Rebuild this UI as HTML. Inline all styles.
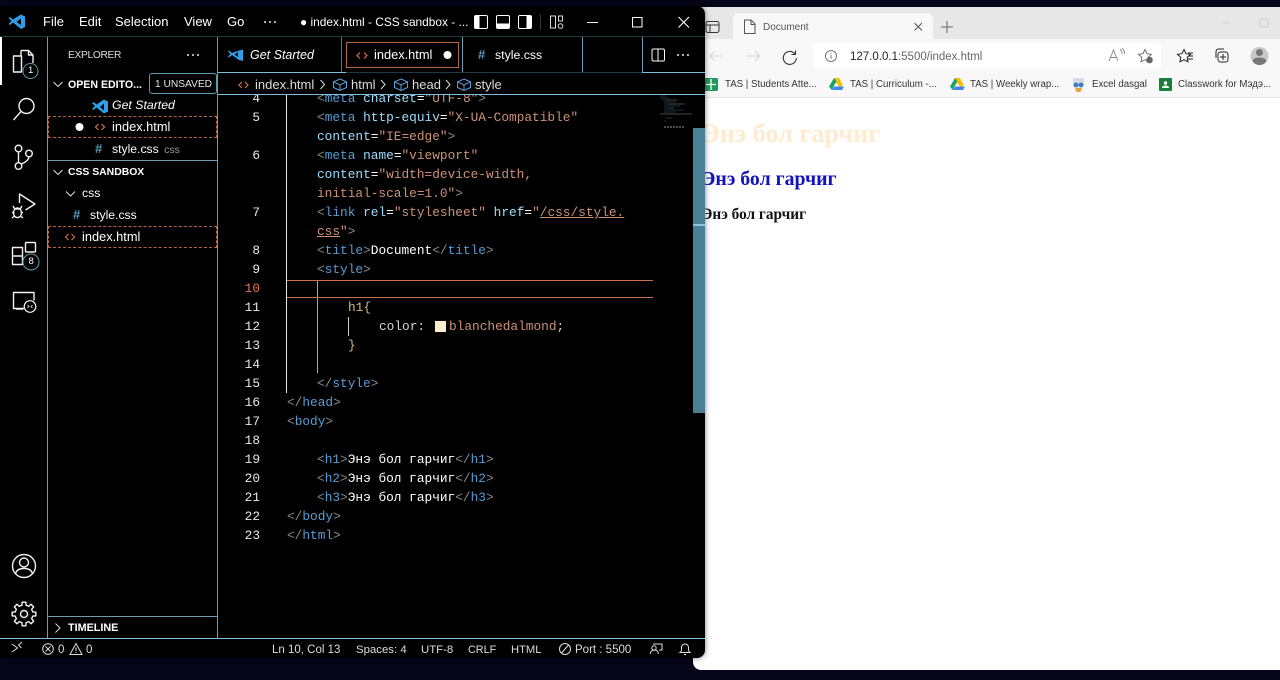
<!DOCTYPE html>
<html><head><meta charset="utf-8"><title>VS Code and browser</title>
<style>
html,body{margin:0;padding:0;width:1280px;height:680px;overflow:hidden;background:#06061a}
body{filter:blur(.3px)}
*{box-sizing:border-box}
.a{position:absolute}
.t{position:absolute;white-space:nowrap;line-height:20px;height:20px;font-family:"Liberation Sans","Noto Sans CJK SC",sans-serif;font-size:12.5px;color:#fff}
.m{font-family:"Liberation Mono",monospace;font-size:12.8px;color:#fff}
.n{font-family:"Liberation Mono",monospace;font-size:12.8px;color:#e8e8e8;width:40px;text-align:right;left:220px}
.g{color:#8a8a8a}.b{color:#569cd6}.c{color:#9cdcfe}.s{color:#ce9178}.y{color:#dcdcaa}.w{color:#fff}.k{color:#d7ba7d}.d{color:#d4d4d4}
.h{font-family:"Liberation Serif",serif;font-weight:bold;position:absolute;white-space:nowrap;line-height:1}
svg{position:absolute;overflow:visible}
.bm{position:absolute;white-space:nowrap;font-family:"Liberation Sans",sans-serif;font-size:9.7px;color:#333;line-height:14px;top:78px}
</style></head><body>

<!-- Browser -->
<div class="a" style="left:693px;top:7px;width:587px;height:663px;background:#fff;border-radius:0 0 0 8px;overflow:hidden">
<div class="a" style="left:0;top:0;width:587px;height:32px;background:#e7e7e7"></div>
<div class="a" style="left:0;top:32px;width:587px;height:59px;background:#f8f8f8;border-bottom:1px solid #e5e5e5"></div>
<div class="a" style="left:40px;top:6px;width:200px;height:27px;background:#f8f8f8;border-radius:6px 6px 0 0"></div>
<div class="a" style="left:120px;top:36px;width:348px;height:25px;background:#fff;border-radius:3px"></div>
</div>

<svg style="left:0;top:0" width="1280" height="680" fill="none">
<!-- browser chrome icons -->
<rect x="706" y="21.500" width="13" height="11" rx="2" stroke="#333" stroke-width="1"/><path d="M706 25h13M710 25v8" stroke="#333"/>
<path d="M744.500 20h6.500l4 4v9.500h-10.500zM751 20v4.500h4" stroke="#555" stroke-width="1"/>
<path d="M914.500 23l7.500 7.500M922 23l-7.500 7.500" stroke="#555" stroke-width="1"/>
<path d="M947 21v12M941 27h12" stroke="#666" stroke-width="1"/>
<path d="M1222 23h8" stroke="#d5d5d5" stroke-width="1.200"/><rect x="1260" y="19" width="8" height="8" rx="1.500" stroke="#cfcfcf"/>
<path d="M723 56h-13M715 51l-5 5 5 5" stroke="#d4d4d4"/><path d="M747 56h13M755 51l5 5-5 5" stroke="#d4d4d4"/>
<path d="M795.500 50.500v4h-4M795 54a6.500 6.500 0 1 0 1.300 4" stroke="#333" stroke-width="1.100"/>
<circle cx="831" cy="56" r="5.500" stroke="#777"/><path d="M831 55v4M831 53v.8" stroke="#777"/>
<path d="M1109 61l4.500-11 4.500 11M1110.500 57.500h6M1120 49q2.500 2.500 2 5M1122 48q3 3 2.500 6" stroke="#8a8a8a" stroke-width=".9"/>
<path d="M1145 49.500l2 4.200 4.500.6-3.300 3.100.8 4.400-4-2.100-4 2.100.8-4.400-3.300-3.100 4.500-.6z" stroke="#666" stroke-width=".9"/><circle cx="1149.500" cy="60" r="3.300" fill="#666"/>
<path d="M1184 49.500l2 4.200 4.500.6-3.300 3.100.8 4.400-4-2.100-4 2.100.8-4.400-3.300-3.100 4.500-.6z" stroke="#222" stroke-width="1"/><path d="M1188 53h5M1189 56h4M1188 59h5" stroke="#222"/>
<rect x="1218" y="52" width="10" height="10" rx="2.500" stroke="#222"/><path d="M1216 58v-6q0-3 3-3h5M1223 54v6M1220 57h6" stroke="#222"/>
<circle cx="1259.500" cy="56" r="9" fill="#c8c8c8"/><circle cx="1259.500" cy="52.500" r="3.500" fill="#777"/><path d="M1252.800 61.500q0-4 6.700-4t6.700 4q-2.500 3.500-6.700 3.500t-6.700-3.500z" fill="#777"/>
<!-- bookmark icons -->
<rect x="704" y="78" width="14" height="13" rx="1.500" fill="#1f9a5c"/><path d="M711 79v11M706 84.500h10" stroke="#fff" stroke-width="1.300"/>
<path d="M834 78h5l3.500 6.500-2.500 4.500" fill="#fbbc04"/><path d="M834 78l-5 8.500 2.500 3.500 5-8.500z" fill="#1ea362"/><path d="M831.500 90h10.500l2-3.500h-10z" fill="#4285f4"/>
<path d="M955 78h5l3.500 6.500-2.500 4.500" fill="#fbbc04"/><path d="M955 78l-5 8.500 2.500 3.500 5-8.500z" fill="#1ea362"/><path d="M952.500 90h10.500l2-3.500h-10z" fill="#4285f4"/>
<rect x="1073" y="78" width="11" height="8" rx="1" fill="#d9d9e8"/><circle cx="1076" cy="85" r="2.500" fill="#3f7fc4"/><circle cx="1081" cy="85" r="2.500" fill="#3f7fc4"/><path d="M1075 88h7l-1.500 4h-4z" fill="#e8a33d"/>
<rect x="1159" y="78" width="13" height="13" rx="1" fill="#188038"/><circle cx="1165.500" cy="83" r="1.700" fill="#fff"/><path d="M1162 88q0-2.500 3.500-2.500t3.500 2.500z" fill="#fff"/>
</svg>
<div class="t" style="left:763px;top:18px;font-size:10px;color:#555">Document</div>
<div class="t" style="left:850px;top:47px;font-size:11.500px;color:#666"><span style="color:#222">127.0.0.1</span>:5500/index.html</div>
<div class="bm" style="left:725px">TAS | Students Atte...</div>
<div class="bm" style="left:850px">TAS | Curriculum -...</div>
<div class="bm" style="left:970px">TAS | Weekly wrap...</div>
<div class="bm" style="left:1092px">Excel dasgal</div>
<div class="bm" style="left:1178px">Classwork for Мэдэ...</div>
<div class="h" style="left:702px;top:121px;font-size:26.200px;color:#ffebcd">Энэ бол гарчиг</div>
<div class="h" style="left:702px;top:170px;font-size:19.800px;color:#1212c0">Энэ бол гарчиг</div>
<div class="h" style="left:702px;top:207px;font-size:15.300px;color:#111">Энэ бол гарчиг</div>

<!-- VS Code window -->
<div class="a" style="left:0;top:6px;width:705px;height:652px;background:#000;border-radius:0 8px 8px 0;overflow:hidden;box-shadow:0 0 6px rgba(0,0,0,.5)">
<div class="a" style="left:693px;top:122px;width:12px;height:285px;background:#4b7f96"></div>
<div class="a" style="left:693px;top:218px;width:12px;height:2px;background:#8fc4dc"></div>
<div class="a" style="left:0;top:30px;width:705px;height:1px;background:#1d3a46"></div>
<div class="a" style="left:47px;top:31px;width:1px;height:601px;background:#6d9cb5"></div>
<div class="a" style="left:217px;top:31px;width:1px;height:601px;background:#6d9cb5"></div>
<div class="a" style="left:0;top:632px;width:705px;height:1px;background:#7fbfdc"></div>
<div class="a" style="left:218px;top:66px;width:128px;height:1px;background:#7fbfdc"></div>
<div class="a" style="left:346px;top:66px;width:296px;height:1px;background:#1d3a46"></div>
<div class="a" style="left:642px;top:66px;width:63px;height:1px;background:#7fbfdc"></div>
<div class="a" style="left:218px;top:88px;width:487px;height:1px;background:#7fbfdc"></div>
<div class="a" style="left:48px;top:154px;width:169px;height:1px;background:#6d9cb5"></div>
<div class="a" style="left:48px;top:610px;width:169px;height:1px;background:#6d9cb5"></div>
<div class="a" style="left:341px;top:31px;width:1px;height:35px;background:#4f7b8f"></div>
<div class="a" style="left:462px;top:31px;width:1px;height:35px;background:#6d9cb5"></div>
<div class="a" style="left:582px;top:31px;width:1px;height:35px;background:#6d9cb5"></div>
<div class="a" style="left:642px;top:31px;width:1px;height:35px;background:#6d9cb5"></div>
<div class="a" style="left:346px;top:36px;width:113px;height:26px;border:1px solid #b5654a"></div>
<div class="a" style="left:0;top:31px;width:2px;height:48px;background:#fff"></div>
<div class="a" style="left:48px;top:110px;width:169px;height:22px;border:1px dashed #b5623f"></div>
<div class="a" style="left:48px;top:220px;width:169px;height:22px;border:1px dashed #b5623f"></div>
<div class="a" style="left:149px;top:67px;width:68px;height:21px;border:1px solid #5f97ad;border-radius:3px;background:#000"></div>
<!-- editor guides -->
<div class="a" style="left:286px;top:89px;width:1px;height:298px;background:#e8e8e8"></div>
<div class="a" style="left:317px;top:274px;width:1px;height:93px;background:#aaa"></div>
<div class="a" style="left:348px;top:311px;width:1px;height:19px;background:#ccc"></div>
<div class="a" style="left:287px;top:274px;width:366px;height:1px;background:#c9714f"></div>
<div class="a" style="left:287px;top:291px;width:366px;height:1px;background:#c9714f"></div>
<div class="a" style="left:435px;top:315px;width:11px;height:11px;background:#ffebcd"></div>
</div>

<!-- code -->
<div class="a" style="left:0;top:95px;width:693px;height:450px;overflow:hidden">
<div class="t n" style="top:-6px">4</div><div class="t m" style="left:317px;top:-6px"><span class="g">&lt;</span><span class="b">meta</span> <span class="c">charset</span>=<span class="s">"UTF-8"</span><span class="g">&gt;</span></div>
</div>
<div class="t n" style="top:108px">5</div><div class="t m" style="left:317px;top:108px"><span class="g">&lt;</span><span class="b">meta</span> <span class="c">http-equiv</span>=<span class="s">"X-UA-Compatible"</span></div>
<div class="t m" style="left:317px;top:127px"><span class="c">content</span>=<span class="s">"IE=edge"</span><span class="g">&gt;</span></div>
<div class="t n" style="top:146px">6</div><div class="t m" style="left:317px;top:146px"><span class="g">&lt;</span><span class="b">meta</span> <span class="c">name</span>=<span class="s">"viewport"</span></div>
<div class="t m" style="left:317px;top:165px"><span class="c">content</span>=<span class="s">"width=device-width,</span></div>
<div class="t m" style="left:317px;top:184px"><span class="s">initial-scale=1.0"</span><span class="g">&gt;</span></div>
<div class="t n" style="top:203px">7</div><div class="t m" style="left:317px;top:203px"><span class="g">&lt;</span><span class="b">link</span> <span class="c">rel</span>=<span class="s">"stylesheet"</span> <span class="c">href</span>=<span class="s">"<u>/css/style.</u></span></div>
<div class="t m" style="left:317px;top:222px"><span class="s"><u>css</u>"</span><span class="g">&gt;</span></div>
<div class="t n" style="top:241px">8</div><div class="t m" style="left:317px;top:241px"><span class="g">&lt;</span><span class="b">title</span><span class="g">&gt;</span>Document<span class="g">&lt;/</span><span class="b">title</span><span class="g">&gt;</span></div>
<div class="t n" style="top:260px">9</div><div class="t m" style="left:317px;top:260px"><span class="g">&lt;</span><span class="b">style</span><span class="g">&gt;</span></div>
<div class="t n" style="top:279px;color:#e8764a">10</div>
<div class="t n" style="top:298px">11</div><div class="t m" style="left:348px;top:298px"><span class="k">h1</span><span class="k">{</span></div>
<div class="t n" style="top:317px">12</div><div class="t m" style="left:379px;top:317px"><span class="d">color:</span></div><div class="t m" style="left:449px;top:317px"><span class="s">blanchedalmond</span><span class="d">;</span></div>
<div class="t n" style="top:336px">13</div><div class="t m" style="left:348px;top:336px"><span class="k">}</span></div>
<div class="t n" style="top:355px">14</div>
<div class="t n" style="top:374px">15</div><div class="t m" style="left:317px;top:374px"><span class="g">&lt;/</span><span class="b">style</span><span class="g">&gt;</span></div>
<div class="t n" style="top:393px">16</div><div class="t m" style="left:287px;top:393px"><span class="g">&lt;/</span><span class="b">head</span><span class="g">&gt;</span></div>
<div class="t n" style="top:412px">17</div><div class="t m" style="left:287px;top:412px"><span class="g">&lt;</span><span class="b">body</span><span class="g">&gt;</span></div>
<div class="t n" style="top:431px">18</div>
<div class="t n" style="top:450px">19</div><div class="t m" style="left:317px;top:450px"><span class="g">&lt;</span><span class="b">h1</span><span class="g">&gt;</span>Энэ бол гарчиг<span class="g">&lt;/</span><span class="b">h1</span><span class="g">&gt;</span></div>
<div class="t n" style="top:469px">20</div><div class="t m" style="left:317px;top:469px"><span class="g">&lt;</span><span class="b">h2</span><span class="g">&gt;</span>Энэ бол гарчиг<span class="g">&lt;/</span><span class="b">h2</span><span class="g">&gt;</span></div>
<div class="t n" style="top:488px">21</div><div class="t m" style="left:317px;top:488px"><span class="g">&lt;</span><span class="b">h3</span><span class="g">&gt;</span>Энэ бол гарчиг<span class="g">&lt;/</span><span class="b">h3</span><span class="g">&gt;</span></div>
<div class="t n" style="top:507px">22</div><div class="t m" style="left:287px;top:507px"><span class="g">&lt;/</span><span class="b">body</span><span class="g">&gt;</span></div>
<div class="t n" style="top:526px">23</div><div class="t m" style="left:287px;top:526px"><span class="g">&lt;/</span><span class="b">html</span><span class="g">&gt;</span></div>

<!-- title bar text -->
<div class="t" style="left:43px;top:12px;font-size:13px">File</div>
<div class="t" style="left:79px;top:12px;font-size:13px">Edit</div>
<div class="t" style="left:115px;top:12px;font-size:13px">Selection</div>
<div class="t" style="left:184px;top:12px;font-size:13px">View</div>
<div class="t" style="left:227px;top:12px;font-size:13px">Go</div>
<div class="t" style="left:300px;top:12px;font-size:11.900px">● index.html - CSS sandbox - ...</div>

<!-- tabs -->
<div class="t" style="left:250px;top:45px;font-size:12.500px;font-style:italic">Get Started</div>
<div class="t" style="left:374px;top:45px;font-size:12.800px">index.html</div>
<div class="t" style="left:495px;top:45px;font-size:12.300px">style.css</div>

<!-- breadcrumbs -->
<div class="t" style="left:255px;top:75px;color:#ddd;font-size:13px">index.html</div>
<div class="t" style="left:351px;top:75px;color:#ddd;font-size:13px">html</div>
<div class="t" style="left:412px;top:75px;color:#ddd;font-size:13px">head</div>
<div class="t" style="left:475px;top:75px;color:#ddd;font-size:13px">style</div>

<!-- sidebar text -->
<div class="t" style="left:68px;top:46px;font-size:10.200px;letter-spacing:-.3px;color:#ddd">EXPLORER</div>
<div class="t" style="left:68px;top:75px;font-size:10.600px;font-weight:bold">OPEN EDITO...</div>
<div class="t" style="left:155px;top:75px;font-size:10.200px;color:#e8e8e8">1 UNSAVED</div>
<div class="t" style="left:112px;top:95px;font-size:12.300px;font-style:italic">Get Started</div>
<div class="t" style="left:112px;top:117px;font-size:12.800px">index.html</div>
<div class="t" style="left:112px;top:139px;font-size:12.200px">style.css <span style="font-size:10.500px;color:#999;margin-left:2px">css</span></div>
<div class="t" style="left:68px;top:163px;font-size:10.400px;font-weight:bold">CSS SANDBOX</div>
<div class="t" style="left:82px;top:183px;font-size:12.300px">css</div>
<div class="t" style="left:90px;top:205px;font-size:12.200px">style.css</div>
<div class="t" style="left:82px;top:227px;font-size:12.800px">index.html</div>
<div class="t" style="left:68px;top:618px;font-size:10.800px;font-weight:bold">TIMELINE</div>

<!-- status -->
<div class="t" style="left:58px;top:640px;font-size:11.500px;color:#ddd">0</div>
<div class="t" style="left:86px;top:640px;font-size:11.500px;color:#ddd">0</div>
<div class="t" style="left:272px;top:640px;font-size:11.500px;color:#ddd">Ln 10, Col 13</div>
<div class="t" style="left:356px;top:640px;font-size:11.400px;color:#ddd">Spaces: 4</div>
<div class="t" style="left:421px;top:640px;font-size:11.400px;color:#ddd">UTF-8</div>
<div class="t" style="left:468px;top:640px;font-size:10.800px;color:#ddd">CRLF</div>
<div class="t" style="left:511px;top:640px;font-size:11.200px;color:#ddd">HTML</div>
<div class="t" style="left:575px;top:640px;font-size:11.500px;color:#ddd">Port : 5500</div>

<!-- hash icons -->
<div class="t" style="left:95px;top:139px;font-size:13px;font-weight:bold;color:#519aba">#</div>
<div class="t" style="left:73px;top:205px;font-size:13px;font-weight:bold;color:#519aba">#</div>
<div class="t" style="left:478px;top:45px;font-size:13px;font-weight:bold;color:#519aba">#</div>

<svg style="left:0;top:0" width="1280" height="680" fill="none">
<!-- VS logo -->
<g><path d="M21 14.500l4 2v10.500l-4 2-8-6.500-3 2.500-1.500-1 3-3-3-3 1.500-1 3 2.500z" fill="#2f9fe8"/><path d="M21 18.500l-4.500 3.200 4.500 3.400z" fill="#000"/></g>
<path d="M244 51.500l4-1v11.500l-4-1-7-5-3 2.500-1-1 2.500-2.500-2.500-2.500 1-1 3 2.500z" transform="translate(-5 -1)" fill="#2f9fe8"/><path d="M239 53l-3.500 2.500 3.500 2.500z" fill="#000" transform="translate(-1 -1)"/>
<path d="M104 99.500l4 2v10l-4 2-7.500-6-3 2.500-1.500-1 3-3-3-3 1.500-1 3 2.500z" fill="#2f9fe8"/><path d="M104 103.500l-4 3.500 4 3.500z" fill="#000"/>
<!-- dots -->
<g fill="#e8e8e8"><circle cx="265" cy="22" r="1"/><circle cx="270" cy="22" r="1"/><circle cx="275" cy="22" r="1"/><circle cx="188" cy="55" r="1"/><circle cx="193" cy="55" r="1"/><circle cx="198" cy="55" r="1"/><circle cx="678" cy="55" r="1"/><circle cx="683" cy="55" r="1"/><circle cx="688" cy="55" r="1"/></g>
<!-- title layout icons -->
<rect x="474.500" y="15.500" width="13" height="13" rx="1.500" stroke="#fff"/><rect x="474.500" y="15.500" width="5" height="13" fill="#fff"/>
<rect x="496.500" y="15.500" width="13" height="13" rx="1.500" stroke="#fff"/><rect x="496.500" y="23.500" width="13" height="5" fill="#fff"/>
<rect x="518.500" y="15.500" width="13" height="13" rx="1.500" stroke="#fff"/><rect x="526.500" y="15.500" width="5" height="13" fill="#fff"/>
<path d="M540.500 14v16" stroke="#333"/>
<path d="M550.500 16h5v12h-5zM558.500 16h4v5h-4z" stroke="#ddd"/><circle cx="560.500" cy="26" r="2.300" stroke="#ddd"/>
<path d="M587 22.500h11" stroke="#fff"/><rect x="632.500" y="17.500" width="9.500" height="9.500" stroke="#fff"/><path d="M678.500 17l10.500 10.500M689 17l-10.500 10.500" stroke="#fff" stroke-width="1.100"/>
<rect x="652" y="49" width="12.500" height="12" rx="1.500" stroke="#fff"/><path d="M658 49v12" stroke="#fff"/>
<!-- activity icons -->
<g stroke="#f2f2f2" stroke-width="1.400" stroke-linejoin="round">
<path d="M21 50.500h7.500l4.500 4.500v8M21 50.500v5M28.500 50.500v4.500h4.500M13.500 56h8v16h-8z"/>
<circle cx="26.500" cy="106" r="7.500"/><path d="M21 111.500l-7.500 8.500"/>
<circle cx="18.500" cy="148.500" r="3.300"/><circle cx="18.500" cy="166" r="3.300"/><circle cx="29" cy="153.500" r="3.300"/><path d="M18.500 152v10.500M29 157q-.5 4-7.500 7"/>
<path d="M19.500 203v-9l15.500 10-9.500 6"/>
<path d="M14 209h7M17.500 208a3.800 3.800 0 0 1 3.800 3.800v2a3.800 3.800 0 0 1-7.600 0v-2a3.800 3.800 0 0 1 3.800-3.800zM12 212.500h2M21 212.500h2M12 218l2-1.500M23 218l-2-1.500M13 206l1.500 2.500M22 206l-1.500 2.500"/>
<path d="M12.500 247.500h10v17h-10zM12.500 256h10"/><rect x="25.500" y="242.500" width="10" height="9.500" rx="1"/>
<path d="M24 308.500h-10.500v-16h20.500v8M16 309h7"/>
<circle cx="24" cy="566" r="11.500"/><circle cx="24" cy="562.500" r="4.500"/><path d="M15.500 574q1-5.500 8.500-5.500t8.500 5.500"/>
<g transform="translate(24 614)"><path d="M-2.020-8.770L-1.880-11.850 1.880-11.850 2.020-8.770 4.770-7.630 7.050-9.710 9.710-7.050 7.630-4.770 8.770-2.020 11.850-1.880 11.850 1.880 8.770 2.020 7.630 4.770 9.710 7.050 7.050 9.710 4.770 7.630 2.020 8.770 1.880 11.850-1.880 11.850-2.020 8.770-4.770 7.630-7.050 9.710-9.710 7.050-7.630 4.770-8.770 2.020-11.850 1.880-11.850-1.880-8.770-2.020-7.630-4.770-9.710-7.050-7.050-9.710-4.770-7.630z"/><circle r="3.500"/></g>
</g>
<circle cx="30.500" cy="71" r="7.500" fill="#000" stroke="#5f97ad" stroke-width="1"/>
<circle cx="31" cy="262" r="8" fill="#000" stroke="#5f97ad" stroke-width="1"/>
<circle cx="30" cy="306.500" r="5.800" fill="#000" stroke="#f2f2f2" stroke-width="1.200"/><path d="M27.500 305l1.500 1.500-1.500 1.500M32.500 305l-1.500 1.500 1.500 1.500" stroke="#f2f2f2" stroke-width=".8"/>
<!-- chevrons -->
<g stroke="#ddd" stroke-width="1">
<path d="M53.500 82l4.500 4.500 4.500-4.500M53.500 170l4.500 4.500 4.500-4.500M66 191.500l4.500 4.500 4.500-4.500M55.500 623.500l4.500 4.500-4.500 4.500"/>
<path d="M320.500 80l4 4.500-4 4.500M381 80l4 4.500-4 4.500M446 80l4 4.500-4 4.500"/>
</g>
<!-- cube icons -->
<g stroke="#5aa0e0" stroke-width="1"><path d="M340 79l6.500 2.800v5.700l-6.500 3-6.500-3v-5.700zM333.500 81.800l6.500 3 6.500-3M340 84.800v5.700"/><path d="M401 79l6.500 2.800v5.700l-6.500 3-6.500-3v-5.700zM394.500 81.800l6.500 3 6.500-3M401 84.800v5.700"/><path d="M464 79l6.500 2.800v5.700l-6.500 3-6.500-3v-5.700zM457.500 81.800l6.500 3 6.500-3M464 84.800v5.700"/></g>
<!-- orange html icons -->
<g stroke="#d96f45" stroke-width="1.200"><path d="M242 82l-3 3 3 3M245 82l3 3-3 3"/><path d="M360 52.500l-3 3 3 3M364 52.500l3 3-3 3"/><path d="M98.500 124l-3 3 3 3M101.500 124l3 3-3 3"/><path d="M68.500 234l-3 3 3 3M71.500 234l3 3-3 3"/></g>
<!-- modified dots -->
<circle cx="447.500" cy="55" r="4" fill="#fff"/><circle cx="79.500" cy="127" r="4" fill="#fff"/>
<!-- status icons -->
<path d="M13 652l5.500-4-5.500-4M23 642l-3.500 3 3 3" stroke="#ddd" stroke-width="1" transform="translate(-1 0)"/>
<circle cx="48" cy="649" r="5.300" stroke="#ddd"/><path d="M45.500 646.500l5 5M50.500 646.500l-5 5" stroke="#ddd"/>
<path d="M76 643.500l6 11h-12zM76 647.500v3.500M76 652v1" stroke="#ddd"/>
<circle cx="565" cy="649" r="5.500" stroke="#ddd"/><path d="M561.500 653l7-8" stroke="#ddd"/>
<path d="M653 644h9v6h-3M650 654q1-4 4.500-4t4 4" stroke="#ddd"/><circle cx="654" cy="648" r="2.200" stroke="#ddd"/>
<path d="M680 652.500q1.500-1 1.500-3.500v-1.500a3.500 3.500 0 0 1 7 0v1.500q0 2.500 1.500 3.500zM684 654.500h2" stroke="#ddd"/>
<!-- minimap -->
<g stroke-width=".6" opacity=".75">
<path d="M660 96h6M660 98h10M662 100h16M664 102h12M664 104h22M664 106h16M664 108h10M664 110h20M664 112h12" stroke="#4e7fa8"/>
<path d="M666 100h10M668 104h16M668 108h6" stroke="#a86f52"/>
<path d="M660 114h32" stroke="#c4c4c4"/>
<path d="M666 118h6M664 121h2" stroke="#777"/>
<path d="M664 127h20" stroke="#888" stroke-width="1.500" stroke-dasharray="2 1"/>
</g>
</svg>
<!-- activity badges text -->
<div class="t" style="left:28px;top:61px;font-size:9.500px;width:6px">1</div>
<div class="t" style="left:28.500px;top:252px;font-size:9.500px;width:6px">8</div>
</body></html>
